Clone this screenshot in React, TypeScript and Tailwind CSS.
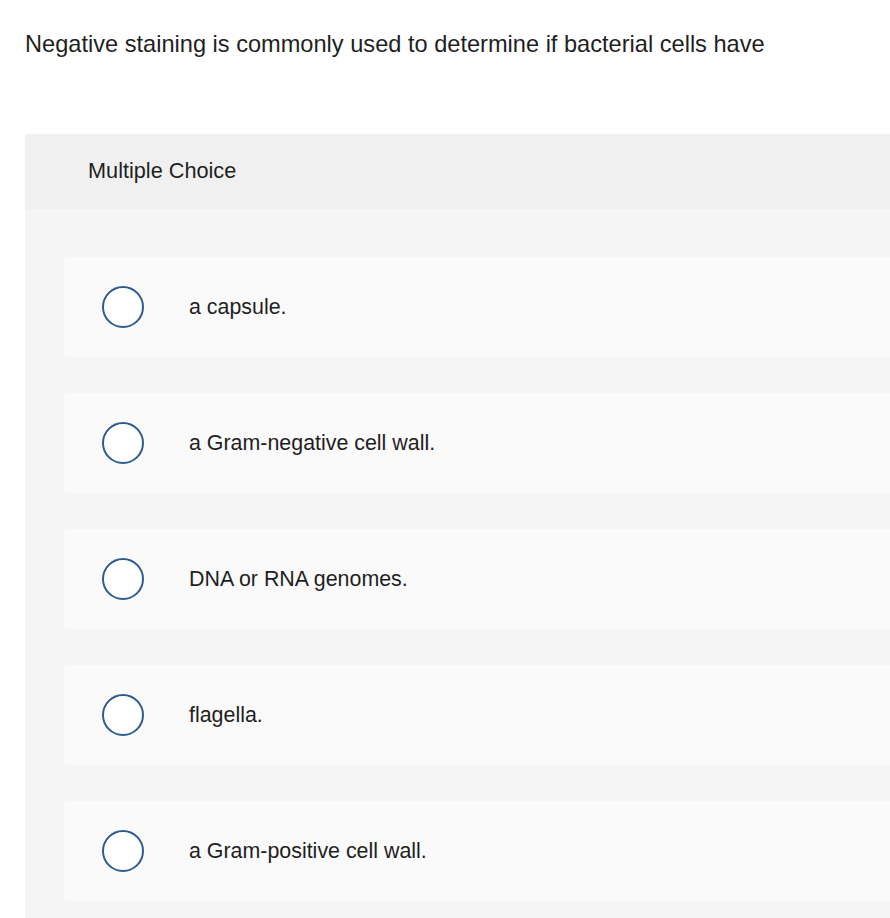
const options = [
  'a capsule.',
  'a Gram-negative cell wall.',
  'DNA or RNA genomes.',
  'flagella.',
  'a Gram-positive cell wall.',
]

function Radio() {
  return (
    <span className="block w-[42px] h-[42px] flex-shrink-0 rounded-full border-2 border-[#2c5b8f] bg-white" />
  )
}

export default function App() {
  return (
    <div
      className="w-[890px] h-[918px] overflow-hidden bg-white text-[#1f1f1f]"
      style={{ fontFamily: '"Liberation Sans", Arial, sans-serif' }}
    >
      <div className="pl-[25px] pt-[31px]">
        <p className="text-[23.6px] leading-[26px] whitespace-nowrap">
          Negative staining is commonly used to determine if bacterial cells have
        </p>
      </div>
      <div className="ml-[25px] mt-[77px] w-[1000px] rounded-tl-[4px] bg-[#f5f5f5]">
        <div className="h-[75px] flex items-center pl-[63px] rounded-tl-[4px] bg-[#f0f0f0] text-[21.7px]">
          Multiple Choice
        </div>
        <div className="pl-[39px] pt-[48px] flex flex-col gap-[36px] pb-[40px]">
          {options.map((text) => (
            <div
              key={text}
              className="h-[100px] flex items-center rounded-[4px] bg-[#fafafa] pl-[38px]"
            >
              <Radio />
              <span className="ml-[45px] text-[21.4px]">{text}</span>
            </div>
          ))}
        </div>
      </div>
    </div>
  )
}
